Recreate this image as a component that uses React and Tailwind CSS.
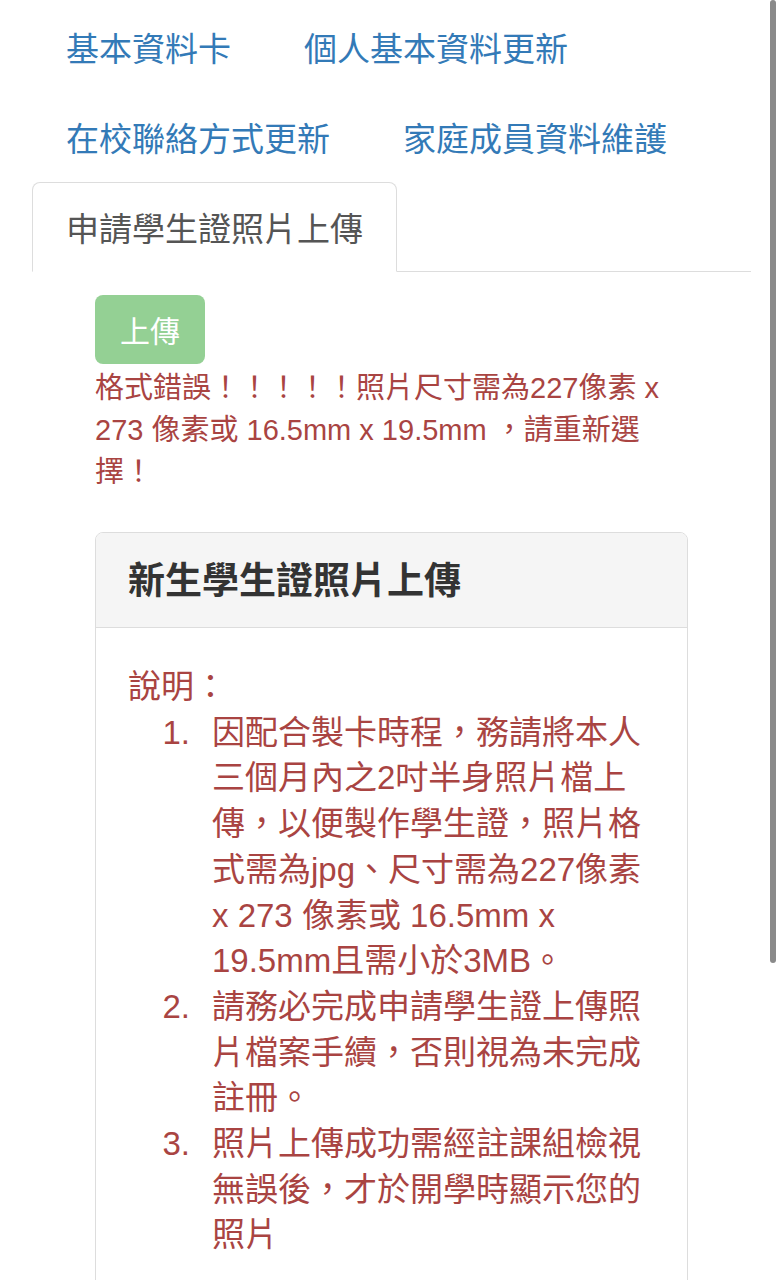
import React from 'react';

const tabs = [
  { id: 0, label: '基本資料卡' },
  { id: 1, label: '個人基本資料更新' },
  { id: 2, label: '在校聯絡方式更新' },
  { id: 3, label: '家庭成員資料維護' },
  { id: 4, label: '申請學生證照片上傳' },
];

const notes = [
  '因配合製卡時程，務請將本人三個月內之2吋半身照片檔上傳，以便製作學生證，照片格式需為jpg、尺寸需為227像素 x 273 像素或 16.5mm x 19.5mm且需小於3MB。',
  '請務必完成申請學生證上傳照片檔案手續，否則視為未完成註冊。',
  '照片上傳成功需經註課組檢視無誤後，才於開學時顯示您的照片',
];

const App = () => {
  const active = 4;

  return (
    <div className="relative min-h-[1280px] bg-white font-['Liberation_Sans','Noto_Sans_CJK_TC',sans-serif] overflow-hidden">
      <div className="px-[32px] pt-[2px]">
        <ul className="flex flex-wrap border-b border-[#ddd]">
          {tabs.map((tab) => (
            <li key={tab.id} className={`mr-[5px] ${active === tab.id ? '-mb-px' : ''}`}>
              <a
                href="#"
                className={`flex h-[90px] items-center border px-[33px] pt-[5px] text-[33px] leading-[44px] ${
                  active === tab.id
                    ? 'rounded-t-[8px] border-[#ddd] border-b-transparent bg-white text-[#555]'
                    : 'border-transparent text-[#337ab7]'
                }`}
              >
                {tab.label}
              </a>
            </li>
          ))}
        </ul>

        <div className="px-[63px] pt-[23px]">
          <button
            disabled
            className="h-[69px] rounded-[8px] bg-[#5cb85c] px-[25px] pt-[3px] text-[30px] text-white opacity-65"
          >
            上傳
          </button>
          <p className="pt-[3px] text-[29px] leading-[42px] text-[#a94442]">
            格式錯誤！！！！！照片尺寸需為227像素 x 273 像素或 16.5mm x 19.5mm ，請重新選擇！
          </p>

          <div className="mt-[39px] rounded-[8px] border border-[#ddd]">
            <div className="flex h-[95px] items-center rounded-t-[7px] border-b border-[#ddd] bg-[#f5f5f5] px-[32px] pt-[4px]">
              <h3 className="text-[37px] font-bold text-[#333]">新生學生證照片上傳</h3>
            </div>
            <div className="px-[32px] pb-[33px] pt-[36px] text-[33px] leading-[45.7px] text-[#a94442]">
              <div>說明：</div>
              <ol>
                {notes.map((note, i) => (
                  <li key={i} className="flex">
                    <span className="w-[84px] shrink-0 pr-[22px] text-right">{i + 1}.</span>
                    <span>{note}</span>
                  </li>
                ))}
              </ol>
            </div>
          </div>
        </div>
      </div>

      {/* scroll indicator */}
      <div className="absolute right-[7px] top-0 h-[963px] w-[6px] rounded-full bg-[#8a8a8a]" />
    </div>
  );
};

export default App;
